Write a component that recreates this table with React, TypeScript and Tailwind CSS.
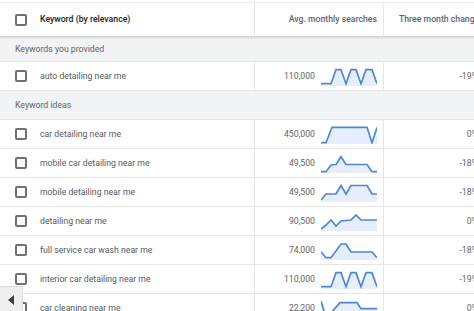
type Pt = [number, number];

const rows: { kw: string; vol: string; chg: string; spark: Pt[] }[] = [
  {
    kw: "car detailing near me",
    vol: "450,000",
    chg: "0%",
    spark: [[0, 16.7], [5, 16.7], [11, 1.3], [46, 1.3], [51, 16.7], [56, 1.5]],
  },
  {
    kw: "mobile car detailing near me",
    vol: "49,500",
    chg: "-18%",
    spark: [[0, 16.7], [5, 16.7], [10, 10], [15, 9.5], [20, 1.7], [25, 9.5], [46, 9.5], [51, 16.7], [56, 16.7]],
  },
  {
    kw: "mobile detailing near me",
    vol: "49,500",
    chg: "-18%",
    spark: [[0, 16], [5, 10], [15, 10], [20, 1.5], [25, 10], [30, 1.5], [46, 1.5], [51, 10], [56, 10]],
  },
  {
    kw: "detailing near me",
    vol: "90,500",
    chg: "0%",
    spark: [[0, 16], [5, 12], [10, 7], [15, 13], [20, 8], [30, 7], [35, 2], [40, 7], [56, 7]],
  },
  {
    kw: "full service car wash near me",
    vol: "74,000",
    chg: "-18%",
    spark: [[0, 9.7], [5, 15.7], [10, 15.7], [20, 2], [25, 2], [30, 10], [51, 10], [56, 15.7]],
  },
  {
    kw: "interior car detailing near me",
    vol: "110,000",
    chg: "-19%",
    spark: [[0, 15.7], [10, 15.7], [15, 1.7], [20, 1.7], [25, 15.7], [30, 1.7], [35, 1.7], [40, 15.7], [45, 1.7], [51, 1.7], [56, 15.7]],
  },
  {
    kw: "car cleaning near me",
    vol: "22,200",
    chg: "0%",
    spark: [[0, 1], [4, 14], [9, 14], [19, 2.7], [36, 2.7], [40, 8.7], [56, 8.7]],
  },
];

const provided = {
  kw: "auto detailing near me",
  vol: "110,000",
  chg: "-19%",
  spark: [[0, 15.7], [10, 15.7], [15, 1.7], [20, 1.7], [25, 15.7], [30, 1.7], [35, 1.7], [40, 15.7], [45, 1.7], [51, 1.7], [56, 15.7]] as Pt[],
};

function Spark({ pts }: { pts: Pt[] }) {
  const line = pts.map((p) => p.join(",")).join(" ");
  const area = `0,18 ${line} 56,18`;
  return (
    <svg width="56" height="18" viewBox="0 0 56 18" className="ml-[6px] mt-[2px] shrink-0">
      <polygon points={area} fill="#e6eefb" />
      <polyline points={line} fill="none" stroke="#4f86d9" strokeWidth="1.7" strokeLinejoin="miter" />
    </svg>
  );
}

function Checkbox() {
  return <span className="w-[12px] h-[12px] border-2 border-[#707070] rounded-[2px] shrink-0" />;
}

function Row({ kw, vol, chg, spark }: { kw: string; vol: string; chg: string; spark: Pt[] }) {
  return (
    <div className="flex h-[29px] border-b border-[#e6e6e6] shrink-0">
      <div className="w-[255px] border-r border-[#e6e6e6] flex items-center pl-[15px]">
        <Checkbox />
        <span className="ml-[13px] text-[#555a5e]">{kw}</span>
      </div>
      <div className="w-[129px] border-r border-[#e6e6e6] flex items-center justify-end pr-[6px]">
        <span className="text-[#5f6368]">{vol}</span>
        <Spark pts={spark} />
      </div>
      <div className="w-[94px] flex items-center justify-end text-[#5f6368] whitespace-nowrap">{chg}</div>
    </div>
  );
}

function Section({ label, h }: { label: string; h: string }) {
  return (
    <div className={`flex items-center pl-[15px] bg-[#f1f3f4] border-b border-[#e6e6e6] text-[#5f6368] shrink-0 ${h}`}>
      {label}
    </div>
  );
}

export default function App() {
  return (
    <div className="relative w-[474px] h-[311px] overflow-hidden bg-white font-['Roboto',sans-serif] text-[8.7px] leading-none">
      <div className="w-[490px] flex flex-col">
        <div className="h-[3px] border-b border-[#ececec] shrink-0" />
        <div className="relative z-10 flex h-[34px] border-b border-[#d6d6d6] shadow-[0_1px_2px_rgba(0,0,0,0.12)] shrink-0 bg-white">
          <div className="w-[255px] border-r border-[#e6e6e6] flex items-center pl-[15px]">
            <Checkbox />
            <span className="ml-[13px] font-medium text-[#202124]">Keyword (by relevance)</span>
          </div>
          <div className="w-[129px] border-r border-[#e6e6e6] flex items-center justify-end pr-[6px]">
            <span className="font-medium text-[#5f6368]">Avg. monthly searches</span>
          </div>
          <div className="w-[106px] flex items-center pl-[15px] font-medium text-[#5f6368] whitespace-nowrap">
            Three month change
          </div>
        </div>
        <Section label="Keywords you provided" h="h-[25px]" />
        <Row {...provided} />
        <Section label="Keyword ideas" h="h-[29px]" />
        {rows.map((r) => (
          <Row key={r.kw} {...r} />
        ))}
      </div>
      <div className="absolute left-0 top-[286px] w-[23px] h-[26px] bg-[#eeeeee] border-r border-t border-[#dcdcdc] flex items-center justify-center">
        <svg width="8" height="10" viewBox="0 0 8 10">
          <polygon points="7,0 7,10 1,5" fill="#3c4043" />
        </svg>
      </div>
    </div>
  );
}
